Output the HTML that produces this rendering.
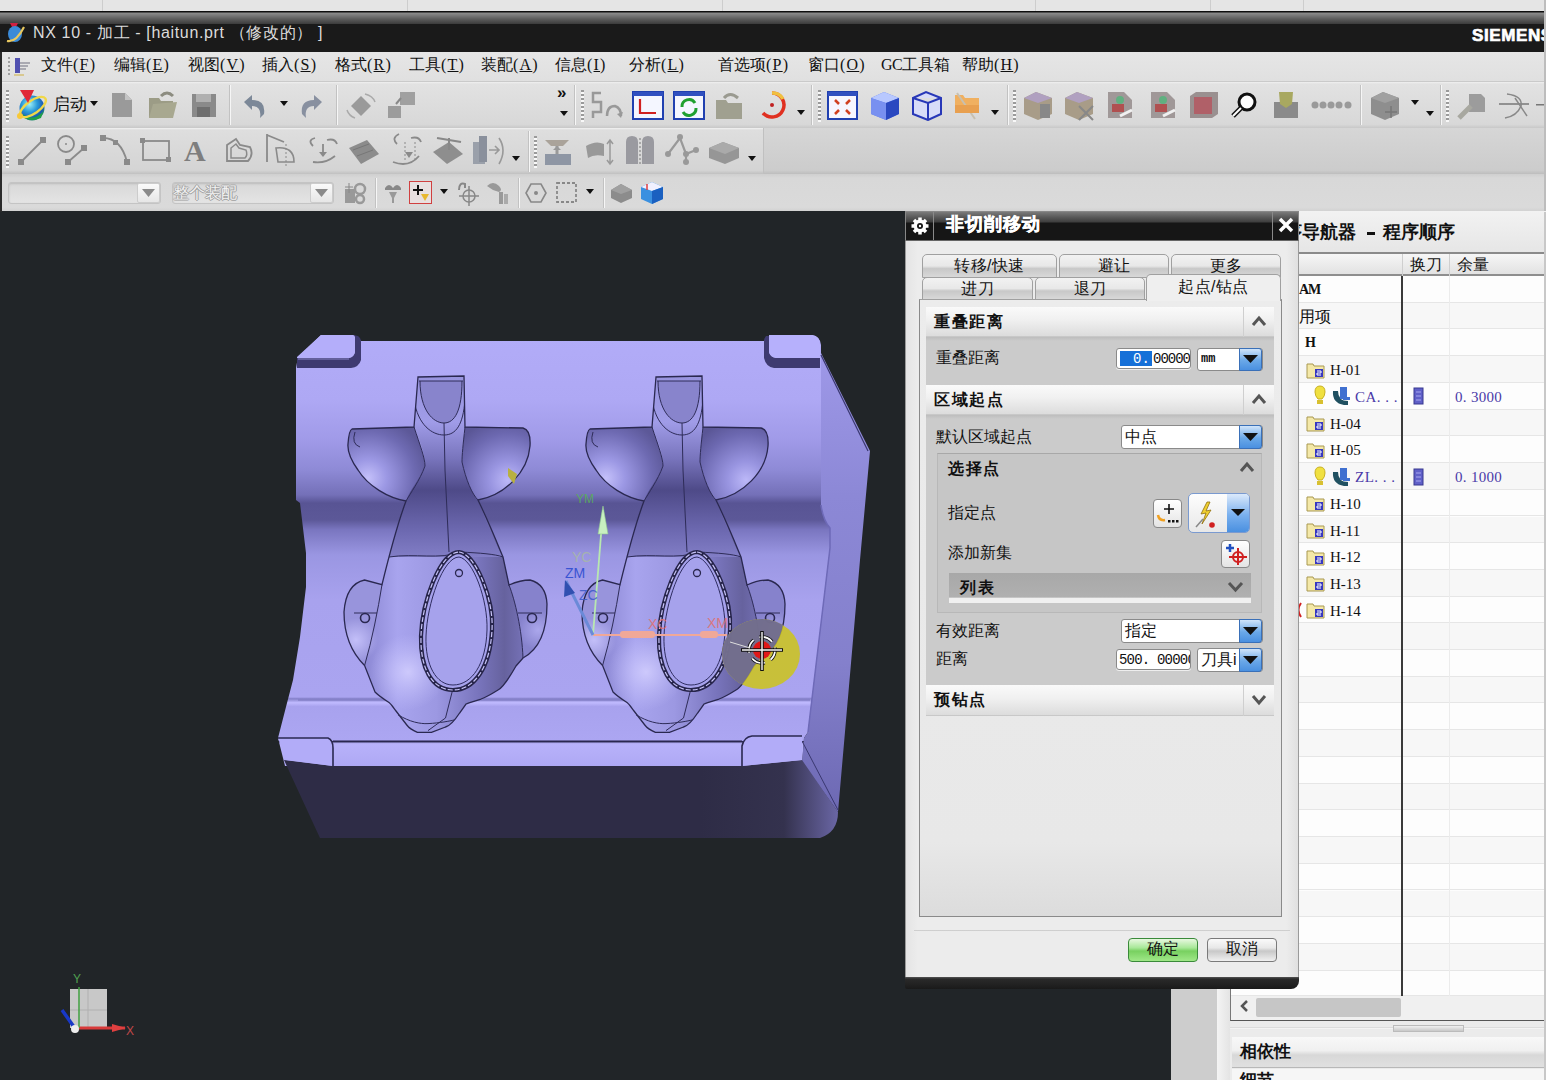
<!DOCTYPE html>
<html><head><meta charset="utf-8"><style>
*{box-sizing:border-box;margin:0;padding:0}
html,body{width:1546px;height:1080px;overflow:hidden;background:#212528;font-family:"Liberation Sans",sans-serif;position:relative}
.a{position:absolute}
.t{position:absolute;white-space:pre;line-height:1}
#topstrip{left:0;top:0;width:1546px;height:12px;background:#e5e5e5}
#topstrip i{position:absolute;top:0;width:1px;height:11px;background:#cdcdcd}
#titlegrad{left:0;top:11px;width:1544px;height:13px;background:linear-gradient(#0e0e0e 0,#0e0e0e 1px,#8c8c8c 2px,#5c5c5c 8px,#3c3c3c 13px)}
#title{left:0;top:24px;width:1544px;height:28px;background:#1a1a1a}
#menubar{left:0;top:52px;width:1544px;height:30px;background:linear-gradient(#e6e6e6,#e0e0e0);border-bottom:1px solid #cacaca}
.menu{top:57px;font-size:16px;color:#111;letter-spacing:0.5px}
#tb1{left:0;top:82px;width:1544px;height:46px;background:linear-gradient(#f0f0f0 0,#e2e2e2 2px,#d8d8d8 92%,#c8c8c8)}
#tb2{left:0;top:128px;width:1544px;height:46px;background:linear-gradient(#f2f2f2 0,#dedede 2px,#d4d4d4 92%,#c0c0c0)}
#tb3{left:0;top:174px;width:1544px;height:37px;background:linear-gradient(#cfcfcf 0,#d8d8d8 4px,#dadada 90%,#d2d2d2)}
#rightedge{left:1544px;top:0;width:2px;height:212px;background:#bdbdbd}
#leftedge{left:0;top:52px;width:2px;height:160px;background:#2a2a2a}
.sep{position:absolute;width:2px;background:linear-gradient(90deg,#c2c2c2 50%,#f6f6f6 50%)}
.grip{position:absolute;width:3px;background:repeating-linear-gradient(#9a9a9a 0 2px,#f8f8f8 2px 4px)}
</style></head><body><div id="wrap" style="position:absolute;left:0;top:0;width:1546px;height:1080px">
<div id="topstrip" class="a"><i style="left:102px"></i><i style="left:407px"></i><i style="left:722px"></i><i style="left:1035px"></i><i style="left:1210px"></i><i style="left:1303px"></i></div>
<div id="titlegrad" class="a"></div><div id="title" class="a"></div>
<svg class="a" style="left:4px;top:21px" width="24" height="24" viewBox="0 0 24 24">
<path d="M6 2 L14 2 L10 10 Z" fill="#d02040"/>
<ellipse cx="11" cy="13" rx="7" ry="8" fill="#3a8ad8"/>
<path d="M3 20 Q12 22 20 6" stroke="#e8c860" stroke-width="2.2" fill="none"/>
</svg>
<div class="t" style="left:33px;top:25px;font-size:16px;color:#dcdcdc;letter-spacing:0.65px">NX 10 - 加工 - [haitun.prt （修改的） ]</div>
<div class="a" style="left:1466px;top:24px;width:78px;height:28px;overflow:hidden"><div class="t" style="left:6px;top:3px;font-size:17px;font-weight:bold;color:#fff;letter-spacing:0.6px;-webkit-text-stroke:0.7px #fff">SIEMENS</div></div>
<div id="menubar" class="a"></div>
<svg class="a" style="left:6px;top:54px" width="26" height="26" viewBox="0 0 26 26">
<g fill="#a0a0a0"><rect x="2" y="3" width="2" height="2"/><rect x="2" y="7" width="2" height="2"/><rect x="2" y="11" width="2" height="2"/><rect x="2" y="15" width="2" height="2"/><rect x="2" y="19" width="2" height="2"/></g>
<rect x="9" y="4" width="5" height="15" fill="#5050b0"/><path d="M14 9 L24 9 M14 12 L22 12 M14 15 L20 15" stroke="#707080" stroke-width="1.2"/>
<path d="M8 21 L18 21" stroke="#d8c890" stroke-width="2"/></svg>
<div class="t menu" style="left:41px;letter-spacing:0">文件<span style="font-family:'Liberation Serif';letter-spacing:1.2px">(<u>F</u>)</span></div>
<div class="t menu" style="left:114px;letter-spacing:0">编辑<span style="font-family:'Liberation Serif';letter-spacing:1.2px">(<u>E</u>)</span></div>
<div class="t menu" style="left:188px;letter-spacing:0">视图<span style="font-family:'Liberation Serif';letter-spacing:1.2px">(<u>V</u>)</span></div>
<div class="t menu" style="left:262px;letter-spacing:0">插入<span style="font-family:'Liberation Serif';letter-spacing:1.2px">(<u>S</u>)</span></div>
<div class="t menu" style="left:335px;letter-spacing:0">格式<span style="font-family:'Liberation Serif';letter-spacing:1.2px">(<u>R</u>)</span></div>
<div class="t menu" style="left:409px;letter-spacing:0">工具<span style="font-family:'Liberation Serif';letter-spacing:1.2px">(<u>T</u>)</span></div>
<div class="t menu" style="left:481px;letter-spacing:0">装配<span style="font-family:'Liberation Serif';letter-spacing:1.2px">(<u>A</u>)</span></div>
<div class="t menu" style="left:555px;letter-spacing:0">信息<span style="font-family:'Liberation Serif';letter-spacing:1.2px">(<u>I</u>)</span></div>
<div class="t menu" style="left:629px;letter-spacing:0">分析<span style="font-family:'Liberation Serif';letter-spacing:1.2px">(<u>L</u>)</span></div>
<div class="t menu" style="left:718px;letter-spacing:0">首选项<span style="font-family:'Liberation Serif';letter-spacing:1.2px">(<u>P</u>)</span></div>
<div class="t menu" style="left:808px;letter-spacing:0">窗口<span style="font-family:'Liberation Serif';letter-spacing:1.2px">(<u>O</u>)</span></div>
<div class="t menu" style="left:881px;letter-spacing:0px"><span style="font-family:'Liberation Serif';letter-spacing:-0.5px">GC</span>工具箱</div>
<div class="t menu" style="left:962px;letter-spacing:0">帮助<span style="font-family:'Liberation Serif';letter-spacing:1.2px">(<u>H</u>)</span></div>
<div id="tb1" class="a"></div><div id="tb2" class="a"></div><div id="tb3" class="a"></div>
<div id="leftedge" class="a"></div><div id="rightedge" class="a"></div>
<div class="grip" style="left:6px;top:90px;height:32px"></div>
<svg class="a" style="left:15px;top:88px" width="34" height="34" viewBox="0 0 34 34"><defs><radialGradient id="globe" cx="0.4" cy="0.35" r="0.7"><stop offset="0" stop-color="#9ef0f8"/><stop offset="0.45" stop-color="#2a9ad8"/><stop offset="0.8" stop-color="#1a58b0"/><stop offset="1" stop-color="#20a050"/></radialGradient></defs>
<circle cx="17" cy="20" r="12.5" fill="url(#globe)"/><path d="M8 26 Q17 34 28 24 L26 30 Q17 34 9 30 Z" fill="#20a048"/>
<ellipse cx="18" cy="19" rx="15" ry="6.5" transform="rotate(-35 18 19)" fill="none" stroke="#f0d848" stroke-width="2.4"/>
<path d="M5 2 L19 2 L13 15 Z" fill="#e02838"/><circle cx="5" cy="28" r="3" fill="#f8c838"/></svg>
<div class="t" style="left:53px;top:96px;font-size:17px;color:#111">启动</div>
<svg class="a" style="left:90px;top:101px" width="9" height="6" viewBox="0 0 9 6"><path d="M0 0 L8 0 L4 5 Z" fill="#111"/></svg>
<svg class="a" style="left:111px;top:92px" width="22" height="26" viewBox="0 0 22 26"><path d="M1 1 L14 1 L21 8 L21 25 L1 25 Z" fill="#9a9a9a"/><path d="M14 1 L14 8 L21 8" fill="#c4c4c4"/></svg>
<svg class="a" style="left:147px;top:90px" width="32" height="30" viewBox="0 0 32 30"><path d="M2 8 L12 8 L14 11 L26 11 L26 28 L2 28 Z" fill="#9c9c86"/><path d="M6 14 L30 12 L26 28 L2 28 Z" fill="#a8a890"/><path d="M14 6 Q20 0 26 6" stroke="#8c8c80" stroke-width="3" fill="none"/></svg>
<svg class="a" style="left:191px;top:93px" width="26" height="25" viewBox="0 0 26 25"><rect x="1" y="1" width="24" height="23" fill="#8a8a8a"/><rect x="5" y="1" width="15" height="8" fill="#b0b0b0"/><rect x="6" y="14" width="13" height="10" fill="#6e6e6e"/></svg>
<div class="sep" style="left:229px;top:85px;height:40px"></div>
<svg class="a" style="left:240px;top:92px" width="28" height="26" viewBox="0 0 28 26"><path d="M4 10 L12 3 L12 8 Q26 8 24 22 L20 26 Q22 14 12 14 L12 18 Z" fill="#7c8898"/></svg>
<svg class="a" style="left:280px;top:101px" width="9" height="6" viewBox="0 0 9 6"><path d="M0 0 L8 0 L4 5 Z" fill="#111"/></svg>
<svg class="a" style="left:298px;top:92px" width="28" height="26" viewBox="0 0 28 26"><path d="M24 10 L16 3 L16 8 Q2 8 4 22 L8 26 Q6 14 16 14 L16 18 Z" fill="#8890a0"/></svg>
<div class="sep" style="left:336px;top:85px;height:40px"></div>
<svg class="a" style="left:345px;top:90px" width="32" height="30" viewBox="0 0 32 30"><path d="M16 6 L26 16 L16 26 L6 16 Z" fill="#9a9a9a"/><path d="M20 4 Q28 6 30 12 M2 20 Q4 26 10 28" stroke="#aaa" stroke-width="1.5" fill="none"/></svg>
<svg class="a" style="left:386px;top:90px" width="32" height="30" viewBox="0 0 32 30"><rect x="14" y="2" width="15" height="13" fill="#a0a0a0"/><rect x="2" y="16" width="13" height="12" fill="#9c9c9c"/><path d="M10 14 L15 8" stroke="#888" stroke-width="2"/></svg>
<div class="t" style="left:557px;top:84px;font-size:17px;font-weight:bold;color:#111">&raquo;</div>
<svg class="a" style="left:560px;top:111px" width="9" height="6" viewBox="0 0 9 6"><path d="M0 0 L8 0 L4 5 Z" fill="#111"/></svg>
<div class="sep" style="left:574px;top:85px;height:40px"></div>
<div class="grip" style="left:581px;top:90px;height:32px"></div>
<svg class="a" style="left:589px;top:90px" width="34" height="30" viewBox="0 0 34 30"><path d="M12 3 L4 3 L4 12 L12 12 L12 22 L4 22 L4 28" stroke="#999" stroke-width="2.5" fill="none"/><path d="M18 26 Q18 16 26 16 Q32 18 32 26" stroke="#999" stroke-width="2.5" fill="none"/><path d="M28 24 L32 28 L34 22" fill="#999"/></svg>
<svg class="a" style="left:632px;top:91px" width="32" height="29" viewBox="0 0 32 29"><rect x="1" y="1" width="30" height="27" fill="#f4f6ff" stroke="#2040b0" stroke-width="2"/><rect x="1" y="1" width="30" height="4" fill="#3050c0"/><path d="M8 8 L8 22 L24 22" stroke="#d02020" stroke-width="2.2" fill="none"/></svg>
<svg class="a" style="left:673px;top:91px" width="32" height="29" viewBox="0 0 32 29"><rect x="1" y="1" width="30" height="27" fill="#f4f6ff" stroke="#2040b0" stroke-width="2"/><rect x="1" y="1" width="30" height="4" fill="#3050c0"/><path d="M9 16 A7 7 0 0 1 22 12 M23 17 A7 7 0 0 1 10 21" stroke="#20a030" stroke-width="3" fill="none"/></svg>
<svg class="a" style="left:714px;top:90px" width="31" height="30" viewBox="0 0 31 30"><path d="M2 10 L12 10 L14 13 L28 13 L28 29 L2 29 Z" fill="#a0a090"/><path d="M10 8 Q16 1 24 8" stroke="#9a9a90" stroke-width="3" fill="none"/></svg>
<svg class="a" style="left:757px;top:89px" width="31" height="32" viewBox="0 0 31 32"><path d="M15 4 A12 12 0 1 1 6 24" stroke="#e03020" stroke-width="3.5" fill="none"/><path d="M15 4 A12 12 0 0 1 26 10" stroke="#f0c040" stroke-width="3.5" fill="none"/><circle cx="15" cy="16" r="2" fill="#c02020"/></svg>
<svg class="a" style="left:797px;top:110px" width="9" height="6" viewBox="0 0 9 6"><path d="M0 0 L8 0 L4 5 Z" fill="#111"/></svg>
<div class="sep" style="left:811px;top:85px;height:40px"></div>
<div class="grip" style="left:818px;top:90px;height:32px"></div>
<svg class="a" style="left:827px;top:91px" width="31" height="29" viewBox="0 0 31 29"><rect x="1" y="1" width="29" height="27" fill="#f6f6ff" stroke="#2040b0" stroke-width="2"/><rect x="1" y="1" width="29" height="4" fill="#3050c0"/><path d="M8 9 L12 13 M23 9 L19 13 M8 23 L12 19 M23 23 L19 19" stroke="#d04020" stroke-width="2.5"/></svg>
<svg class="a" style="left:868px;top:90px" width="33" height="31" viewBox="0 0 33 31"><path d="M3 8 L16 2 L31 8 L31 24 L18 30 L3 24 Z" fill="#5a7ae8"/><path d="M3 8 L16 2 L31 8 L18 13 Z" fill="#b8c8ff"/><path d="M18 13 L31 8 L31 24 L18 30 Z" fill="#2a48c0"/><path d="M3 8 L18 13 L18 30 L3 24 Z" fill="#7890f0"/></svg>
<svg class="a" style="left:910px;top:90px" width="33" height="31" viewBox="0 0 33 31"><path d="M3 8 L16 2 L31 8 L31 24 L18 30 L3 24 Z M3 8 L18 13 L31 8 M18 13 L18 30" fill="#d8dcf8" stroke="#2838b8" stroke-width="2"/></svg>
<svg class="a" style="left:951px;top:89px" width="33" height="32" viewBox="0 0 33 32"><path d="M4 6 L12 6 L14 9 L28 9 L28 24 L4 24 Z" fill="#f0b060"/><path d="M6 4 L24 30" stroke="#c8c0b0" stroke-width="2"/><rect x="4" y="16" width="24" height="8" fill="#e8a050"/></svg>
<svg class="a" style="left:991px;top:110px" width="9" height="6" viewBox="0 0 9 6"><path d="M0 0 L8 0 L4 5 Z" fill="#111"/></svg>
<div class="sep" style="left:1007px;top:85px;height:40px"></div>
<div class="grip" style="left:1013px;top:90px;height:32px"></div>
<svg class="a" style="left:1022px;top:90px" width="32" height="31" viewBox="0 0 32 31"><path d="M2 8 L14 2 L30 8 L30 24 L16 30 L2 24 Z" fill="#a89c88"/><path d="M2 8 L14 2 L30 8 L16 13 Z" fill="#b0a0c0"/><rect x="18" y="14" width="10" height="14" fill="#888"/></svg>
<svg class="a" style="left:1063px;top:90px" width="32" height="31" viewBox="0 0 32 31"><path d="M2 8 L14 2 L30 8 L30 24 L16 30 L2 24 Z" fill="#a89c88"/><path d="M2 8 L14 2 L30 8 L16 13 Z" fill="#b0a0c0"/><path d="M16 16 L30 30 M30 16 L16 30" stroke="#888" stroke-width="2"/></svg>
<svg class="a" style="left:1106px;top:90px" width="28" height="30" viewBox="0 0 28 30"><path d="M2 2 L18 2 L26 10 L26 28 L2 28 Z" fill="#a09898"/><circle cx="14" cy="10" r="4" fill="#60b080"/><rect x="6" y="14" width="12" height="8" fill="#b05050"/><path d="M14 26 L26 20" stroke="#f0f0f0" stroke-width="3"/></svg>
<svg class="a" style="left:1149px;top:90px" width="28" height="30" viewBox="0 0 28 30"><path d="M2 2 L18 2 L26 10 L26 28 L2 28 Z" fill="#a09898"/><circle cx="14" cy="10" r="4" fill="#60b080"/><rect x="6" y="14" width="12" height="8" fill="#b05050"/><path d="M14 26 L26 20" stroke="#f0f0f0" stroke-width="3"/></svg>
<svg class="a" style="left:1188px;top:90px" width="31" height="30" viewBox="0 0 31 30"><path d="M2 6 L8 2 L30 2 L30 24 L24 28 L2 28 Z" fill="#9a9090"/><rect x="6" y="7" width="18" height="17" fill="#b06068"/></svg>
<svg class="a" style="left:1230px;top:90px" width="30" height="30" viewBox="0 0 30 30"><circle cx="17" cy="12" r="8" fill="#fff" stroke="#111" stroke-width="3"/><path d="M11 18 L3 26" stroke="#111" stroke-width="5"/><path d="M11 18 L3 26" stroke="#fff" stroke-width="2"/></svg>
<svg class="a" style="left:1272px;top:90px" width="28" height="30" viewBox="0 0 28 30"><rect x="2" y="12" width="24" height="16" fill="#8a8a8a"/><path d="M7 2 L21 2 L20 14 L14 18 L8 14 Z" fill="#a8a860"/></svg>
<svg class="a" style="left:1311px;top:98px" width="42" height="14" viewBox="0 0 42 14"><circle cx="4" cy="7" r="3.5" fill="#9a9a9a"/><circle cx="12" cy="7" r="3.5" fill="#9a9a9a"/><circle cx="20" cy="7" r="3.5" fill="#9a9a9a"/><circle cx="28" cy="7" r="3.5" fill="#9a9a9a"/><circle cx="37" cy="7" r="3.5" fill="#9a9a9a"/></svg>
<div class="sep" style="left:1360px;top:85px;height:40px"></div>
<svg class="a" style="left:1369px;top:90px" width="32" height="31" viewBox="0 0 32 31"><path d="M2 8 L14 2 L30 8 L30 24 L16 30 L2 24 Z" fill="#8e8e8e"/><path d="M2 8 L14 2 L30 8 L16 13 Z" fill="#a0a0a0"/><path d="M16 22 L28 22 M22 16 L22 28" stroke="#777" stroke-width="1.5"/></svg>
<svg class="a" style="left:1411px;top:100px" width="9" height="6" viewBox="0 0 9 6"><path d="M0 0 L8 0 L4 5 Z" fill="#111"/></svg>
<svg class="a" style="left:1426px;top:111px" width="9" height="6" viewBox="0 0 9 6"><path d="M0 0 L8 0 L4 5 Z" fill="#111"/></svg>
<div class="sep" style="left:1440px;top:85px;height:40px"></div>
<div class="grip" style="left:1446px;top:90px;height:32px"></div>
<svg class="a" style="left:1455px;top:90px" width="34" height="32" viewBox="0 0 34 32"><path d="M14 4 L26 4 L30 8 L30 22 L14 22 Z" fill="#9c9c9c"/><path d="M4 28 L16 16" stroke="#a8a8a0" stroke-width="5"/></svg>
<svg class="a" style="left:1497px;top:90px" width="34" height="30" viewBox="0 0 34 30"><path d="M2 14 L32 14" stroke="#777" stroke-width="1.5"/><path d="M10 4 Q26 6 24 16 Q20 26 8 28" stroke="#888" stroke-width="1.5" fill="none"/><path d="M18 8 L30 26" stroke="#888" stroke-width="1.5"/></svg>
<svg class="a" style="left:1536px;top:104px" width="8" height="3" viewBox="0 0 8 3"><rect width="8" height="1.5" fill="#777"/></svg>
<div class="grip" style="left:6px;top:136px;height:32px"></div>
<svg class="a" style="left:17px;top:136px" width="30" height="30" viewBox="0 0 30 30"><path d="M4 26 L26 4" stroke="#8a8a8a" stroke-width="1.8"/><rect x="1" y="23" width="6" height="6" fill="#8a8a8a"/><rect x="23" y="1" width="6" height="6" fill="#8a8a8a"/></svg>
<svg class="a" style="left:56px;top:134px" width="34" height="34" viewBox="0 0 34 34"><circle cx="10" cy="10" r="8" fill="none" stroke="#8a8a8a" stroke-width="1.8"/><circle cx="10" cy="10" r="1" fill="#8a8a8a"/><path d="M12 28 L28 14" stroke="#8a8a8a" stroke-width="1.8"/><rect x="9" y="25" width="6" height="6" fill="#8a8a8a"/><rect x="25" y="11" width="6" height="6" fill="#8a8a8a"/></svg>
<svg class="a" style="left:99px;top:134px" width="34" height="34" viewBox="0 0 34 34"><path d="M4 4 Q22 4 28 28" stroke="#8a8a8a" stroke-width="1.8" fill="none"/><rect x="1" y="1" width="6" height="6" fill="#8a8a8a"/><rect x="14" y="6" width="5" height="5" fill="#8a8a8a"/><rect x="25" y="25" width="6" height="6" fill="#8a8a8a"/></svg>
<svg class="a" style="left:140px;top:138px" width="32" height="26" viewBox="0 0 32 26"><rect x="3" y="3" width="26" height="19" fill="none" stroke="#8a8a8a" stroke-width="1.8"/><rect x="0" y="0" width="5" height="5" fill="#8a8a8a"/><rect x="26" y="19" width="5" height="5" fill="#8a8a8a"/></svg>
<div class="t" style="left:184px;top:136px;font-size:30px;font-family:'Liberation Serif';font-weight:bold;color:#7e7e7e">A</div>
<svg class="a" style="left:224px;top:137px" width="30" height="28" viewBox="0 0 30 28"><path d="M3 8 L12 2 L16 8 L26 10 Q30 18 24 24 L3 24 Z" fill="none" stroke="#8a8a8a" stroke-width="1.8"/><path d="M7 11 L12 7 L15 11 L22 13 Q24 18 21 21 L7 21 Z" fill="none" stroke="#8a8a8a" stroke-width="1.5"/></svg>
<svg class="a" style="left:264px;top:132px" width="34" height="36" viewBox="0 0 34 36"><path d="M3 2 L3 30 M3 3 L20 10" stroke="#8a8a8a" stroke-width="1.8"/><path d="M12 16 Q30 14 30 30 L14 30 Z" stroke="#8a8a8a" stroke-width="1.6" fill="none"/><path d="M22 12 L22 34" stroke="#8a8a8a" stroke-dasharray="2 2"/></svg>
<svg class="a" style="left:305px;top:134px" width="34" height="34" viewBox="0 0 34 34"><path d="M10 4 Q2 6 8 12 M22 6 Q30 4 32 10 M8 28 Q20 30 30 22 M18 10 L18 22" stroke="#8a8a8a" stroke-width="1.8" fill="none"/><path d="M14 18 L22 18 L18 23 Z" fill="#8a8a8a"/></svg>
<svg class="a" style="left:347px;top:136px" width="34" height="30" viewBox="0 0 34 30"><path d="M2 12 L20 4 L32 18 L14 28 Z" fill="#8c8c8c"/><path d="M6 14 L22 8 M10 20 L26 14" stroke="#777" stroke-width="1"/></svg>
<svg class="a" style="left:389px;top:132px" width="34" height="36" viewBox="0 0 34 36"><path d="M10 2 Q2 6 8 12 M22 6 Q30 4 32 10 M4 30 Q20 36 30 24" stroke="#8a8a8a" stroke-width="1.8" fill="none"/><path d="M16 10 L16 28 M26 10 L26 28" stroke="#8a8a8a" stroke-dasharray="2 2"/><path d="M16 20 L24 20 L20 26 Z" fill="#8a8a8a"/></svg>
<svg class="a" style="left:431px;top:132px" width="34" height="36" viewBox="0 0 34 36"><path d="M2 20 L18 10 L32 22 L16 32 Z" fill="#8e8e8e"/><path d="M6 6 L30 10" stroke="#888" stroke-width="2"/><path d="M18 6 L18 18" stroke="#888" stroke-width="2"/></svg>
<svg class="a" style="left:471px;top:134px" width="36" height="32" viewBox="0 0 36 32"><rect x="2" y="8" width="12" height="22" fill="#9aa0aa"/><rect x="8" y="2" width="8" height="26" fill="#8a909c"/><path d="M18 16 L28 16 M24 12 L28 16 L24 20" stroke="#999" stroke-width="1.6" fill="none"/><path d="M28 4 Q36 16 28 30" stroke="#999" stroke-width="1.6" fill="none"/></svg>
<svg class="a" style="left:512px;top:156px" width="9" height="6" viewBox="0 0 9 6"><path d="M0 0 L8 0 L4 5 Z" fill="#111"/></svg>
<div class="sep" style="left:528px;top:131px;height:41px"></div>
<div class="grip" style="left:534px;top:136px;height:32px"></div>
<svg class="a" style="left:543px;top:134px" width="30" height="32" viewBox="0 0 30 32"><path d="M2 6 L26 6 L20 12 L8 12 Z" fill="#aaa39a"/><path d="M14 12 L14 20" stroke="#999" stroke-width="3"/><path d="M10 16 L14 12 L18 16" fill="#999"/><rect x="2" y="20" width="26" height="11" fill="#8e96a4"/></svg>
<svg class="a" style="left:584px;top:136px" width="30" height="30" viewBox="0 0 30 30"><path d="M2 10 Q12 4 20 8 L20 20 Q10 18 4 22 Z" fill="#999"/><path d="M26 4 L26 28 M23 8 L26 4 L29 8 M23 24 L26 28 L29 24" stroke="#999" stroke-width="1.5" fill="none"/></svg>
<svg class="a" style="left:624px;top:134px" width="34" height="32" viewBox="0 0 34 32"><path d="M2 30 L2 8 Q2 2 8 2 Q14 2 14 8 L14 30 Z M18 30 L18 8 Q18 2 24 2 Q30 2 30 8 L30 30 Z" fill="#9a9aa0"/><path d="M16 4 L16 30" stroke="#777" stroke-dasharray="2 2"/></svg>
<svg class="a" style="left:664px;top:132px" width="36" height="36" viewBox="0 0 36 36"><path d="M4 22 L16 6 L22 22 L32 18 M16 6 L16 4 M22 22 L22 32" stroke="#999" stroke-width="2.2" fill="none"/><circle cx="16" cy="5" r="3" fill="#999"/><circle cx="4" cy="22" r="3" fill="#999"/><circle cx="22" cy="22" r="3" fill="#999"/><circle cx="32" cy="18" r="3" fill="#999"/><circle cx="22" cy="30" r="3" fill="#999"/></svg>
<svg class="a" style="left:707px;top:138px" width="34" height="26" viewBox="0 0 34 26"><path d="M2 10 L16 4 L32 10 L32 20 L18 26 L2 20 Z" fill="#969696"/><path d="M2 10 L16 4 L32 10 L18 16 Z" fill="#aaa"/></svg>
<svg class="a" style="left:748px;top:156px" width="9" height="6" viewBox="0 0 9 6"><path d="M0 0 L8 0 L4 5 Z" fill="#111"/></svg>
<div class="a" style="left:763px;top:128px;width:781px;height:46px;background:linear-gradient(#d6d6d6,#cccccc 92%,#bdbdbd);border-left:1px solid #c0c0c0"></div>
<div class="a" style="left:8px;top:182px;width:153px;height:22px;border:1px solid #c4c4c4;border-radius:3px;background:linear-gradient(#d8d8d8,#e4e4e4);box-shadow:inset 0 1px 2px #bbb"></div>
<div class="a" style="left:137px;top:183px;width:23px;height:20px;border:1px solid #ccc;border-radius:2px;background:linear-gradient(#fafafa,#e6e6e6)"></div>
<svg class="a" style="left:142px;top:189px" width="13" height="9" viewBox="0 0 13 9"><path d="M0 0 L13 0 L6.5 8 Z" fill="#8a8a8a"/></svg>
<div class="a" style="left:172px;top:182px;width:162px;height:22px;border:1px solid #c4c4c4;border-radius:3px;background:linear-gradient(#d8d8d8,#e4e4e4);box-shadow:inset 0 1px 2px #bbb"></div>
<div class="a" style="left:310px;top:183px;width:23px;height:20px;border:1px solid #ccc;border-radius:2px;background:linear-gradient(#fafafa,#e6e6e6)"></div>
<svg class="a" style="left:315px;top:189px" width="13" height="9" viewBox="0 0 13 9"><path d="M0 0 L13 0 L6.5 8 Z" fill="#8a8a8a"/></svg>
<div class="t" style="left:173px;top:185px;font-size:16px;color:#f2f2f2;text-shadow:1px 0 0 #a0a0a0,-1px 0 0 #a0a0a0,0 1px 0 #a0a0a0,0 -1px 0 #a8a8a8">整个装配</div>
<svg class="a" style="left:343px;top:181px" width="26" height="24" viewBox="0 0 26 24"><rect x="2" y="8" width="10" height="14" fill="#999"/><circle cx="17" cy="8" r="5" fill="none" stroke="#999" stroke-width="2.5"/><circle cx="17" cy="18" r="4" fill="none" stroke="#999" stroke-width="2.5"/><path d="M6 2 L6 12 M2 6 L10 6" stroke="#888"/></svg>
<div class="sep" style="left:375px;top:178px;height:30px"></div>
<svg class="a" style="left:383px;top:182px" width="20" height="22" viewBox="0 0 20 22"><path d="M2 6 Q6 0 10 6 Q14 0 18 6 L18 8 L2 8 Z" fill="#888"/><path d="M6 10 L14 10 L11 16 L11 21 L9 21 L9 16 Z" fill="#999"/></svg>
<div class="a" style="left:409px;top:181px;width:23px;height:23px;border:1.5px solid #d04040;background:#e8e0e0"></div>
<svg class="a" style="left:411px;top:183px" width="20" height="20" viewBox="0 0 20 20"><path d="M7 2 L7 12 M2 7 L12 7" stroke="#111" stroke-width="2"/><path d="M10 11 L18 11 L14 18 Z" fill="#e8b830"/></svg>
<svg class="a" style="left:440px;top:189px" width="9" height="6" viewBox="0 0 9 6"><path d="M0 0 L8 0 L4 5 Z" fill="#111"/></svg>
<svg class="a" style="left:455px;top:180px" width="24" height="26" viewBox="0 0 24 26"><path d="M4 10 Q4 2 10 4 L10 8" stroke="#888" stroke-width="2" fill="none"/><circle cx="14" cy="16" r="6" fill="none" stroke="#888" stroke-width="1.5"/><path d="M14 6 L14 26 M4 16 L24 16" stroke="#888" stroke-width="1.5"/></svg>
<svg class="a" style="left:485px;top:180px" width="24" height="26" viewBox="0 0 24 26"><path d="M2 6 Q8 0 14 6 Q18 10 14 12 L8 10 Z" fill="#999"/><rect x="14" y="12" width="4" height="12" fill="#999"/><rect x="19" y="14" width="4" height="10" fill="#aaa"/></svg>
<div class="sep" style="left:518px;top:178px;height:30px"></div>
<svg class="a" style="left:525px;top:182px" width="22" height="22" viewBox="0 0 22 22"><path d="M6 2 L16 2 L21 11 L16 20 L6 20 L1 11 Z" fill="none" stroke="#888" stroke-width="1.6"/><circle cx="11" cy="11" r="2" fill="#888"/></svg>
<svg class="a" style="left:555px;top:181px" width="24" height="24" viewBox="0 0 24 24"><rect x="2" y="2" width="19" height="19" fill="none" stroke="#888" stroke-width="1.8" stroke-dasharray="3 2"/></svg>
<svg class="a" style="left:586px;top:189px" width="9" height="6" viewBox="0 0 9 6"><path d="M0 0 L8 0 L4 5 Z" fill="#111"/></svg>
<div class="sep" style="left:603px;top:178px;height:30px"></div>
<svg class="a" style="left:609px;top:182px" width="25" height="22" viewBox="0 0 25 22"><path d="M2 8 L12 2 L23 8 L23 16 L12 21 L2 16 Z" fill="#8c8c8c"/><path d="M2 8 L12 2 L23 8 L12 12 Z" fill="#a0a0a0"/></svg>
<svg class="a" style="left:639px;top:180px" width="26" height="26" viewBox="0 0 26 26"><path d="M2 7 L13 2 L24 7 L24 19 L13 24 L2 19 Z" fill="#3a90e0"/><path d="M2 7 L13 2 L24 7 L13 11 Z" fill="#f0f0ff"/><path d="M13 11 L24 7 L24 19 L13 24 Z" fill="#1a60c0"/><path d="M8 4 L8 10" stroke="#e04040" stroke-width="1.5"/></svg>

<svg class="a" style="left:0;top:0" width="1546" height="1080" viewBox="0 0 1546 1080">
<defs>
<linearGradient id="gSurf" gradientUnits="userSpaceOnUse" x1="0" y1="335" x2="0" y2="766">
<stop offset="0" stop-color="#b2acf8"/>
<stop offset="0.151" stop-color="#aea8f4"/>
<stop offset="0.244" stop-color="#a09ae8"/>
<stop offset="0.313" stop-color="#8e8ad6"/>
<stop offset="0.371" stop-color="#7470b8"/>
<stop offset="0.39" stop-color="#585494"/>
<stop offset="0.429" stop-color="#5c5898"/>
<stop offset="0.452" stop-color="#7a76c0"/>
<stop offset="0.51" stop-color="#9a96e2"/>
<stop offset="0.615" stop-color="#a8a2ee"/>
<stop offset="0.84" stop-color="#aaa4f0"/>
<stop offset="0.844" stop-color="#8480c8"/>
<stop offset="0.853" stop-color="#c0baff"/>
<stop offset="0.862" stop-color="#a8a2ee"/>
<stop offset="0.941" stop-color="#aca6f2"/>
<stop offset="0.943" stop-color="#2a2850"/>
<stop offset="0.948" stop-color="#b8b2fa"/>
<stop offset="1" stop-color="#aea8f4"/>
</linearGradient>
<linearGradient id="gSide" gradientUnits="userSpaceOnUse" x1="0" y1="353" x2="0" y2="830">
<stop offset="0" stop-color="#9e98e8"/>
<stop offset="0.3" stop-color="#8c88d6"/>
<stop offset="0.65" stop-color="#8480cc"/>
<stop offset="1" stop-color="#6a66b0"/>
</linearGradient>
<linearGradient id="gBot" gradientUnits="userSpaceOnUse" x1="700" y1="0" x2="840" y2="0">
<stop offset="0" stop-color="#2e2c46"/>
<stop offset="0.6" stop-color="#34324e"/>
<stop offset="1" stop-color="#6c68a8"/>
</linearGradient>
<linearGradient id="gBody" gradientUnits="userSpaceOnUse" x1="360" y1="0" x2="530" y2="0">
<stop offset="0" stop-color="#9a96de"/>
<stop offset="0.2" stop-color="#b4b0f4"/>
<stop offset="0.45" stop-color="#a8a4ee"/>
<stop offset="0.75" stop-color="#8c88d2"/>
<stop offset="1" stop-color="#7e7ac4"/>
</linearGradient>
<radialGradient id="gFinL" gradientUnits="userSpaceOnUse" cx="375" cy="485" r="60">
<stop offset="0" stop-color="#c8c4fc"/>
<stop offset="0.35" stop-color="#a4a0ea"/>
<stop offset="1" stop-color="#6a66ae"/>
</radialGradient>
<radialGradient id="gFinR" gradientUnits="userSpaceOnUse" cx="500" cy="490" r="60">
<stop offset="0" stop-color="#c0bcfa"/>
<stop offset="0.35" stop-color="#a09ce6"/>
<stop offset="1" stop-color="#6a66ae"/>
</radialGradient>
<linearGradient id="gNeck" gradientUnits="userSpaceOnUse" x1="0" y1="380" x2="0" y2="560">
<stop offset="0" stop-color="#9c98e2"/>
<stop offset="0.25" stop-color="#a8a4ec"/>
<stop offset="0.55" stop-color="#5e5aa0"/>
<stop offset="0.8" stop-color="#7a76c0"/>
<stop offset="1" stop-color="#9894dc"/>
</linearGradient>
<linearGradient id="gNoz" gradientUnits="userSpaceOnUse" x1="0" y1="381" x2="0" y2="425">
<stop offset="0" stop-color="#8a86d0"/>
<stop offset="1" stop-color="#a29eea"/>
</linearGradient>
<radialGradient id="gLow" gradientUnits="userSpaceOnUse" cx="355" cy="630" r="30">
<stop offset="0" stop-color="#b8b4f6"/>
<stop offset="1" stop-color="#7a76c0"/>
</radialGradient>
<radialGradient id="gLowR" gradientUnits="userSpaceOnUse" cx="536" cy="610" r="30">
<stop offset="0" stop-color="#a8a4ee"/>
<stop offset="1" stop-color="#6e6ab4"/>
</radialGradient>
<radialGradient id="gHi" gradientUnits="userSpaceOnUse" cx="400" cy="650" r="55">
<stop offset="0" stop-color="#d0ccff" stop-opacity="0.8"/>
<stop offset="1" stop-color="#d0ccff" stop-opacity="0"/>
</radialGradient>
<clipPath id="cFish"><path d="M418,377 L464,376 L465,427 L523,428 Q531,430 530,446 C528,472 505,495 478,500 C490,525 498,545 503,557 L509,585 C516,582 524,580 530,580 Q546,584 547,604 Q547,645 523,658 L516,666 C508,680 502,688 498,690 C490,695 484,698 481,699 C474,701 469,703 466,704 L459.6,713 C455,720 450,726 445.5,727 L431.5,732.4 L417.4,732.4 C412,730 409,728 406.8,725 L396,711 C393,707 391,704 389,702.5 C382,698 378,695 375,692 L364.6,665.5 Q344,645 344,612 Q346,584 364.6,580 L382,584.6 C388,560 396,528 406,501 C388,498 368,486 358,470 Q347,455 348,444 Q349,430 352,429 L414,427 Z"/></clipPath>
<linearGradient id="gBody2" gradientUnits="userSpaceOnUse" x1="360" y1="0" x2="530" y2="0">
<stop offset="0" stop-color="#8884d0"/>
<stop offset="0.22" stop-color="#a8a4ee"/>
<stop offset="0.45" stop-color="#9c98e2"/>
<stop offset="0.7" stop-color="#7874bc"/>
<stop offset="0.85" stop-color="#66629e"/>
<stop offset="1" stop-color="#7a76be"/>
</linearGradient>
<radialGradient id="gFinL2" gradientUnits="userSpaceOnUse" cx="368" cy="478" r="62">
<stop offset="0" stop-color="#c4c0fa"/>
<stop offset="0.3" stop-color="#9c98e4"/>
<stop offset="0.75" stop-color="#6e6ab2"/>
<stop offset="1" stop-color="#5c5898"/>
</radialGradient>
<radialGradient id="gFinR2" gradientUnits="userSpaceOnUse" cx="508" cy="480" r="62">
<stop offset="0" stop-color="#bcb8f8"/>
<stop offset="0.3" stop-color="#9894e0"/>
<stop offset="0.75" stop-color="#6c68b0"/>
<stop offset="1" stop-color="#5a5696"/>
</radialGradient>
<linearGradient id="gNeck2" gradientUnits="userSpaceOnUse" x1="0" y1="376" x2="0" y2="560">
<stop offset="0" stop-color="#9894de"/>
<stop offset="0.25" stop-color="#a09ce8"/>
<stop offset="0.45" stop-color="#7874bc"/>
<stop offset="0.62" stop-color="#4e4a88"/>
<stop offset="0.85" stop-color="#6e6ab2"/>
<stop offset="1" stop-color="#8480c8"/>
</linearGradient>
<radialGradient id="gHL" gradientUnits="userSpaceOnUse" cx="408" cy="672" r="38">
<stop offset="0" stop-color="#d4d0ff" stop-opacity="0.85"/>
<stop offset="1" stop-color="#c8c4ff" stop-opacity="0"/>
</radialGradient>
<radialGradient id="gLF" gradientUnits="userSpaceOnUse" cx="356" cy="640" r="22">
<stop offset="0" stop-color="#c8c4fc" stop-opacity="0.9"/>
<stop offset="1" stop-color="#c8c4fc" stop-opacity="0"/>
</radialGradient>
<radialGradient id="gRF" gradientUnits="userSpaceOnUse" cx="538" cy="630" r="20">
<stop offset="0" stop-color="#b4b0f4" stop-opacity="0.8"/>
<stop offset="1" stop-color="#b4b0f4" stop-opacity="0"/>
</radialGradient>
<g id="fish">
<path d="M418,377 L464,376 L465,427 L523,428 Q531,430 530,446 C528,472 505,495 478,500 C490,525 498,545 503,557 L509,585 C516,582 524,580 530,580 Q546,584 547,604 Q547,645 523,658 L516,666 C508,680 502,688 498,690 C490,695 484,698 481,699 C474,701 469,703 466,704 L459.6,713 C455,720 450,726 445.5,727 L431.5,732.4 L417.4,732.4 C412,730 409,728 406.8,725 L396,711 C393,707 391,704 389,702.5 C382,698 378,695 375,692 L364.6,665.5 Q344,645 344,612 Q346,584 364.6,580 L382,584.6 C388,560 396,528 406,501 C388,498 368,486 358,470 Q347,455 348,444 Q349,430 352,429 L414,427 Z" fill="url(#gBody2)"/>
<g clip-path="url(#cFish)">
<path d="M344,420 L414,427 C420,445 425,458 425,466 C420,480 410,494 406,501 L340,510 Z" fill="url(#gFinL2)"/>
<path d="M465,427 L550,420 L550,510 L478,500 C472,494 466,480 462,462 C462,455 463,445 465,427 Z" fill="url(#gFinR2)"/>
<path d="M414,370 L470,370 L465,427 C463,445 462,455 462,462 C466,480 472,494 478,500 C488,525 496,545 503,557 L389,557 C392,540 398,520 406,501 C410,490 420,478 425,466 C425,455 420,440 414,427 Z" fill="url(#gNeck2)"/>
<path d="M420,381 C420,410 433,423 444,423 C455,423 462,410 462,381 Z" fill="#8884cc"/>
<path d="M414,400 C418,425 432,435 444,435 C456,435 463,425 465,400" fill="none" stroke="#2e2c58" stroke-width="1"/>
<path d="M364.6,580 L382,584.6 C378,610 372,640 364.6,665.5 Q344,645 344,612 Q346,584 364.6,580 Z" fill="#9894dc"/>
<circle cx="356" cy="640" r="22" fill="url(#gLF)"/>
<path d="M509,585 C516,582 524,580 530,580 Q546,584 547,604 Q547,645 523,658 C522,630 515,600 509,585 Z" fill="#8682cc"/>
<circle cx="538" cy="630" r="20" fill="url(#gRF)"/>
<circle cx="408" cy="672" r="38" fill="url(#gHL)"/>
</g>
<path d="M418,377 L464,376 L465,427 L523,428 Q531,430 530,446 C528,472 505,495 478,500 C490,525 498,545 503,557 L509,585 C516,582 524,580 530,580 Q546,584 547,604 Q547,645 523,658 L516,666 C508,680 502,688 498,690 C490,695 484,698 481,699 C474,701 469,703 466,704 L459.6,713 C455,720 450,726 445.5,727 L431.5,732.4 L417.4,732.4 C412,730 409,728 406.8,725 L396,711 C393,707 391,704 389,702.5 C382,698 378,695 375,692 L364.6,665.5 Q344,645 344,612 Q346,584 364.6,580 L382,584.6 C388,560 396,528 406,501 C388,498 368,486 358,470 Q347,455 348,444 Q349,430 352,429 L414,427 Z" fill="none" stroke="#2a2850" stroke-width="1.3"/>
<g fill="none" stroke="#2e2c58" stroke-width="1">
<path d="M420,381 C420,410 433,423 444,423 C455,423 462,410 462,381"/>
<path d="M419,381 L463,381"/>
<path d="M414,427 C420,445 425,458 425,466 C420,480 410,494 406,501"/>
<path d="M465,427 C463,445 462,455 462,462 C466,480 472,494 478,500"/>
<path d="M444,423 L445,470 L449,552"/>
<path d="M389,557 C415,553 440,560 460,552 C480,553 495,554 503,557"/>
<path d="M382,584.6 C378,610 372,640 364.6,665.5"/>
<path d="M509,585 C515,600 522,630 523,658"/>
<path d="M354,613 L377,613 M518,613 L542,613"/>
<path d="M452.6,690 L445.5,718 L428,730.6"/>
<path d="M398,714.8 C410,722 420,724 428,723.6 C440,723 450,721 454,720"/>
<path d="M355,432 Q351,444 360,447"/>
</g>
<path d="M459,552 C476,554 494,600 492,630 C490,668 474,690 453,690 C432,690 420,668 421,636 C422,602 440,552 459,552 Z" fill="#a6a2ec" stroke="#26244a" stroke-width="4.2"/>
<path d="M459,552 C476,554 494,600 492,630 C490,668 474,690 453,690 C432,690 420,668 421,636 C422,602 440,552 459,552 Z" fill="none" stroke="#c8c4f8" stroke-width="1.2" stroke-dasharray="5 2"/>
<path d="M459,557 C473,559 488,600 487,630 C486,664 472,685 453,685 C436,685 425,665 426,636 C427,604 443,557 459,557 Z" fill="none" stroke="#2e2c60" stroke-width="1"/>
<circle cx="459" cy="573" r="3.5" fill="none" stroke="#2a2850" stroke-width="1.3"/>
<circle cx="365" cy="618" r="4.5" fill="none" stroke="#2a2850" stroke-width="1.6"/>
<circle cx="532" cy="618" r="4.5" fill="none" stroke="#2a2850" stroke-width="1.6"/>
</g>
</defs>
<!-- main top surface -->
<path d="M296,368 L298,357 L321,335 L354,335 L361,341 L764,341 L770,335 L812,335 Q820,336 821,345 L821,505 Q823,520 830,528 L830,548 L808,732 L804,738 L802,766 L285,766 L278,738 L287,703 L293,680 L300,637 L306,587 L306,553 L300,503 L296,500 Z" fill="url(#gSurf)"/>
<!-- right side face -->
<path d="M821,353 L870,451 L860,560 L838,812 L802,762 L804,738 L808,732 L830,548 L830,528 Q823,520 821,505 Z" fill="url(#gSide)"/>
<path d="M821,505 Q823,520 830,528 L830,548 L808,732" fill="none" stroke="#6e6ab8" stroke-width="1.5"/>
<path d="M821,355 L868,451" stroke="#3a3870" stroke-width="1.2" fill="none"/>
<!-- bottom face -->
<path d="M284,760 L333,766 L742,766 L802,760 L838,812 Q838,832 820,838 L320,838 Z" fill="url(#gBot)"/>
<path d="M802,741 L838,810" stroke="#3a3870" stroke-width="1"/>
<!-- pads -->
<path d="M353,335 L358,336 Q361,338 361,342 L361,360 Q359,367 351,368 L297,368 L297,358 L349,358 Q354,357 355,352 L355,337 Z" fill="#3e3a70"/>
<path d="M297,357 L321,335 L353,335 L355,337 L355,352 Q354,357 349,358 L297,358 Z" fill="#b4aefa"/>
<path d="M298,359 L349,359" stroke="#8a86c8" stroke-width="1"/>
<path d="M766,336 Q764,338 764,342 L764,358 Q766,367 774,368 L820,368 L820,358 L776,358 Q770,357 769,352 L769,336 Z" fill="#3e3a70"/>
<path d="M769,335 L812,335 Q820,336 820,345 L820,358 L776,358 Q770,357 769,352 Z" fill="#b6b0fc"/>
<path d="M278,738 L328,738 Q333,740 333,748 L333,766 L286,760 Z" fill="#b2acf8"/>
<path d="M278,738 L328,738 Q333,740 333,748 L333,766" fill="none" stroke="#2a2850" stroke-width="1.6"/>
<path d="M752,736 L802,736 L802,760 L742,766 L742,746 Q744,737 752,736 Z" fill="#b2acf8"/>
<path d="M802,736 L752,736 Q744,737 742,746 L742,766" fill="none" stroke="#2a2850" stroke-width="1.6"/>
<path d="M333,741 L742,741" stroke="#26244a" stroke-width="1.2"/>
<path d="M298,700 L810,700" stroke="#7c78c0" stroke-width="1.5" opacity="0.7"/>
<!-- fish -->
<use href="#fish"/>
<use href="#fish" transform="translate(238,0)"/>
<!-- small yellow marker -->
<path d="M508,468 L517,474 L514,484 L508,476 Z" fill="#b8b040"/>
<!-- yellow circle -->
<ellipse cx="761" cy="654" rx="39" ry="35" fill="#ccc420" opacity="0.88"/>
<g transform="translate(238,0)" clip-path="url(#cFish)"><ellipse cx="523" cy="654" rx="39" ry="35" fill="#64609e" opacity="0.85"/></g>
<!-- axes -->
<path d="M593,635 L727,635" stroke="#f0a898" stroke-width="2"/>
<rect x="620" y="631" width="35" height="7" rx="3" fill="#f0a898"/>
<rect x="700" y="631" width="18" height="7" rx="3" fill="#f0a898"/>
<path d="M593,635 L603,510" stroke="#b8e8b0" stroke-width="1.8"/>
<path d="M603,506 L598,534 L608,534 Z" fill="#c8f0c0" stroke="#90c890" stroke-width="0.6"/>
<path d="M593,635 L566,581" stroke="#6a8ad8" stroke-width="3"/>
<path d="M565,580 L564,597 L575,593 Z" fill="#3050b0"/>
<g font-family="Liberation Sans" font-size="14" opacity="0.85">
<text x="576" y="503" fill="#58b058" font-size="12">YM</text>
<text x="572" y="562" fill="#a8b8a8">YC</text>
<text x="565" y="578" fill="#2848d0">ZM</text>
<text x="579" y="600" fill="#3a58c8">ZC</text>
<text x="648" y="629" fill="#e07070">XC</text>
<text x="707" y="628" fill="#e07070">XM</text>
</g>
<!-- crosshair -->
<circle cx="762" cy="650" r="9" fill="#e01818"/>
<circle cx="762" cy="650" r="13" fill="none" stroke="#111" stroke-width="3.5" stroke-dasharray="14 6.4" stroke-dashoffset="3"/>
<circle cx="762" cy="650" r="13" fill="none" stroke="#fff" stroke-width="1.8" stroke-dasharray="14 6.4" stroke-dashoffset="3"/>
<path d="M741,650 L783,650 M762,631 L762,671" stroke="#111" stroke-width="3.6"/>
<path d="M742,650 L782,650 M762,632 L762,670" stroke="#f8f8f8" stroke-width="1.4"/>
<path d="M730,642 L750,648" stroke="#ddd" stroke-width="1"/>
<!-- triad -->
<g>
<rect x="70" y="989" width="37" height="39" fill="#c8c8c8"/>
<path d="M70,1010 L107,1010 M88,989 L88,1028" stroke="#b0b0b0" stroke-width="1"/>
<path d="M79,1028 L125,1028" stroke="#d83a3a" stroke-width="3"/>
<path d="M112,1024 L126,1028 L112,1032 Z" fill="#e04040"/>
<path d="M79,987 L79,1028" stroke="#40a040" stroke-width="1.5"/>
<path d="M74,1027 L62,1010" stroke="#1838c8" stroke-width="3.5"/>
<circle cx="75" cy="1029" r="4" fill="#eee"/>
<text x="73" y="983" font-family="Liberation Sans" font-size="12" fill="#50a050">Y</text>
<text x="126" y="1035" font-family="Liberation Sans" font-size="12" fill="#c04848">X</text>
</g>
</svg>

<div class="a" style="left:1171px;top:989px;width:46px;height:91px;background:#cdcdcd"></div>
<div class="a" style="left:1217px;top:989px;width:13px;height:91px;background:linear-gradient(90deg,#f4f4f4,#e4e4e4)"></div>
<div class="a" style="left:1171px;top:211px;width:375px;height:778px;background:#ececec"></div>
<div class="a" style="left:1230px;top:989px;width:316px;height:91px;background:#ebebeb"></div>
<div class="a" style="left:1230px;top:211px;width:316px;height:43px;background:linear-gradient(#f2f2f2,#e6e6e6);border-bottom:2px solid #8a8a8a"></div>
<div class="t" style="left:1284px;top:224px;font-size:17.5px;font-weight:bold;color:#111">序导航器</div>
<div class="a" style="left:1367px;top:232px;width:8px;height:2.5px;background:#111"></div>
<div class="t" style="left:1383px;top:224px;font-size:17.5px;font-weight:bold;color:#111">程序顺序</div>
<div class="a" style="left:1230px;top:254px;width:314px;height:743px;background:#fdfdfd;border-left:1px solid #777"></div>
<div class="a" style="left:1230px;top:254px;width:314px;height:22px;background:linear-gradient(#f6f6f6,#e2e2e2);border-bottom:2px solid #8e8e8e"></div>
<div class="a" style="left:1402px;top:254px;width:1px;height:22px;background:#cfcfcf"></div>
<div class="a" style="left:1449px;top:254px;width:1px;height:22px;background:#cfcfcf"></div>
<div class="t" style="left:1410px;top:257px;font-size:16px;color:#111">换刀</div>
<div class="t" style="left:1457px;top:257px;font-size:16px;color:#111">余量</div>
<div class="a" style="left:1231px;top:276.0px;width:313px;height:26.7px;background:#fdfdfd;border-bottom:1px solid #e6e6e6"></div>
<div class="a" style="left:1231px;top:302.7px;width:313px;height:26.7px;background:#f7f7f7;border-bottom:1px solid #e6e6e6"></div>
<div class="a" style="left:1231px;top:329.4px;width:313px;height:26.7px;background:#fdfdfd;border-bottom:1px solid #e6e6e6"></div>
<div class="a" style="left:1231px;top:356.2px;width:313px;height:26.7px;background:#f7f7f7;border-bottom:1px solid #e6e6e6"></div>
<div class="a" style="left:1231px;top:382.9px;width:313px;height:26.7px;background:#fdfdfd;border-bottom:1px solid #e6e6e6"></div>
<div class="a" style="left:1231px;top:409.6px;width:313px;height:26.7px;background:#f7f7f7;border-bottom:1px solid #e6e6e6"></div>
<div class="a" style="left:1231px;top:436.3px;width:313px;height:26.7px;background:#fdfdfd;border-bottom:1px solid #e6e6e6"></div>
<div class="a" style="left:1231px;top:463.0px;width:313px;height:26.7px;background:#f7f7f7;border-bottom:1px solid #e6e6e6"></div>
<div class="a" style="left:1231px;top:489.8px;width:313px;height:26.7px;background:#fdfdfd;border-bottom:1px solid #e6e6e6"></div>
<div class="a" style="left:1231px;top:516.5px;width:313px;height:26.7px;background:#f7f7f7;border-bottom:1px solid #e6e6e6"></div>
<div class="a" style="left:1231px;top:543.2px;width:313px;height:26.7px;background:#fdfdfd;border-bottom:1px solid #e6e6e6"></div>
<div class="a" style="left:1231px;top:569.9px;width:313px;height:26.7px;background:#f7f7f7;border-bottom:1px solid #e6e6e6"></div>
<div class="a" style="left:1231px;top:596.6px;width:313px;height:26.7px;background:#fdfdfd;border-bottom:1px solid #e6e6e6"></div>
<div class="a" style="left:1231px;top:623.4px;width:313px;height:26.7px;background:#f7f7f7;border-bottom:1px solid #e6e6e6"></div>
<div class="a" style="left:1231px;top:650.1px;width:313px;height:26.7px;background:#fdfdfd;border-bottom:1px solid #e6e6e6"></div>
<div class="a" style="left:1231px;top:676.8px;width:313px;height:26.7px;background:#f7f7f7;border-bottom:1px solid #e6e6e6"></div>
<div class="a" style="left:1231px;top:703.5px;width:313px;height:26.7px;background:#fdfdfd;border-bottom:1px solid #e6e6e6"></div>
<div class="a" style="left:1231px;top:730.2px;width:313px;height:26.7px;background:#f7f7f7;border-bottom:1px solid #e6e6e6"></div>
<div class="a" style="left:1231px;top:757.0px;width:313px;height:26.7px;background:#fdfdfd;border-bottom:1px solid #e6e6e6"></div>
<div class="a" style="left:1231px;top:783.7px;width:313px;height:26.7px;background:#f7f7f7;border-bottom:1px solid #e6e6e6"></div>
<div class="a" style="left:1231px;top:810.4px;width:313px;height:26.7px;background:#fdfdfd;border-bottom:1px solid #e6e6e6"></div>
<div class="a" style="left:1231px;top:837.1px;width:313px;height:26.7px;background:#f7f7f7;border-bottom:1px solid #e6e6e6"></div>
<div class="a" style="left:1231px;top:863.8px;width:313px;height:26.7px;background:#fdfdfd;border-bottom:1px solid #e6e6e6"></div>
<div class="a" style="left:1231px;top:890.6px;width:313px;height:26.7px;background:#f7f7f7;border-bottom:1px solid #e6e6e6"></div>
<div class="a" style="left:1231px;top:917.3px;width:313px;height:26.7px;background:#fdfdfd;border-bottom:1px solid #e6e6e6"></div>
<div class="a" style="left:1231px;top:944.0px;width:313px;height:26.7px;background:#f7f7f7;border-bottom:1px solid #e6e6e6"></div>
<div class="a" style="left:1231px;top:970.7px;width:313px;height:25.3px;background:#fdfdfd;border-bottom:1px solid #e6e6e6"></div>
<div class="a" style="left:1401px;top:276px;width:2px;height:720px;background:#3a3a3a"></div>
<div class="a" style="left:1449px;top:276px;width:1px;height:720px;background:#ececec"></div>
<div class="t" style="left:1299px;top:283.0px;font-size:14px;color:#111;font-family:'Liberation Serif',serif;font-weight:bold;letter-spacing:-1px;">AM</div>
<div class="t" style="left:1299px;top:308.7px;font-size:16px;color:#111">用项</div>
<div class="t" style="left:1305px;top:336.4px;font-size:14px;color:#111;font-family:'Liberation Serif',serif;font-weight:bold;">H</div>
<svg class="a" style="left:1306px;top:361px" width="20" height="18" viewBox="0 0 20 18"><path d="M1 3 L7 3 L8 5 L18 5 L18 17 L1 17 Z" fill="#f4e8a8" stroke="#a89850" stroke-width="1"/><rect x="9" y="8" width="8" height="8" fill="#3838c0"/><path d="M11 10 L15 10 L15 12 L11 12 L11 14 L15 14" stroke="#fff" stroke-width="1" fill="none"/></svg>
<div class="t" style="left:1330px;top:363.2px;font-size:15px;color:#111;font-family:'Liberation Serif',serif;letter-spacing:0px;">H-01</div>
<svg class="a" style="left:1306px;top:414px" width="20" height="18" viewBox="0 0 20 18"><path d="M1 3 L7 3 L8 5 L18 5 L18 17 L1 17 Z" fill="#f4e8a8" stroke="#a89850" stroke-width="1"/><rect x="9" y="8" width="8" height="8" fill="#3838c0"/><path d="M11 10 L15 10 L15 12 L11 12 L11 14 L15 14" stroke="#fff" stroke-width="1" fill="none"/></svg>
<div class="t" style="left:1330px;top:416.6px;font-size:15px;color:#111;font-family:'Liberation Serif',serif;letter-spacing:0px;">H-04</div>
<svg class="a" style="left:1306px;top:441px" width="20" height="18" viewBox="0 0 20 18"><path d="M1 3 L7 3 L8 5 L18 5 L18 17 L1 17 Z" fill="#f4e8a8" stroke="#a89850" stroke-width="1"/><rect x="9" y="8" width="8" height="8" fill="#3838c0"/><path d="M11 10 L15 10 L15 12 L11 12 L11 14 L15 14" stroke="#fff" stroke-width="1" fill="none"/></svg>
<div class="t" style="left:1330px;top:443.3px;font-size:15px;color:#111;font-family:'Liberation Serif',serif;letter-spacing:0px;">H-05</div>
<svg class="a" style="left:1306px;top:494px" width="20" height="18" viewBox="0 0 20 18"><path d="M1 3 L7 3 L8 5 L18 5 L18 17 L1 17 Z" fill="#f4e8a8" stroke="#a89850" stroke-width="1"/><rect x="9" y="8" width="8" height="8" fill="#3838c0"/><path d="M11 10 L15 10 L15 12 L11 12 L11 14 L15 14" stroke="#fff" stroke-width="1" fill="none"/></svg>
<div class="t" style="left:1330px;top:496.8px;font-size:15px;color:#111;font-family:'Liberation Serif',serif;letter-spacing:0px;">H-10</div>
<svg class="a" style="left:1306px;top:521px" width="20" height="18" viewBox="0 0 20 18"><path d="M1 3 L7 3 L8 5 L18 5 L18 17 L1 17 Z" fill="#f4e8a8" stroke="#a89850" stroke-width="1"/><rect x="9" y="8" width="8" height="8" fill="#3838c0"/><path d="M11 10 L15 10 L15 12 L11 12 L11 14 L15 14" stroke="#fff" stroke-width="1" fill="none"/></svg>
<div class="t" style="left:1330px;top:523.5px;font-size:15px;color:#111;font-family:'Liberation Serif',serif;letter-spacing:0px;">H-11</div>
<svg class="a" style="left:1306px;top:548px" width="20" height="18" viewBox="0 0 20 18"><path d="M1 3 L7 3 L8 5 L18 5 L18 17 L1 17 Z" fill="#f4e8a8" stroke="#a89850" stroke-width="1"/><rect x="9" y="8" width="8" height="8" fill="#3838c0"/><path d="M11 10 L15 10 L15 12 L11 12 L11 14 L15 14" stroke="#fff" stroke-width="1" fill="none"/></svg>
<div class="t" style="left:1330px;top:550.2px;font-size:15px;color:#111;font-family:'Liberation Serif',serif;letter-spacing:0px;">H-12</div>
<svg class="a" style="left:1306px;top:574px" width="20" height="18" viewBox="0 0 20 18"><path d="M1 3 L7 3 L8 5 L18 5 L18 17 L1 17 Z" fill="#f4e8a8" stroke="#a89850" stroke-width="1"/><rect x="9" y="8" width="8" height="8" fill="#3838c0"/><path d="M11 10 L15 10 L15 12 L11 12 L11 14 L15 14" stroke="#fff" stroke-width="1" fill="none"/></svg>
<div class="t" style="left:1330px;top:576.9px;font-size:15px;color:#111;font-family:'Liberation Serif',serif;letter-spacing:0px;">H-13</div>
<svg class="a" style="left:1306px;top:601px" width="20" height="18" viewBox="0 0 20 18"><path d="M1 3 L7 3 L8 5 L18 5 L18 17 L1 17 Z" fill="#f4e8a8" stroke="#a89850" stroke-width="1"/><rect x="9" y="8" width="8" height="8" fill="#3838c0"/><path d="M11 10 L15 10 L15 12 L11 12 L11 14 L15 14" stroke="#fff" stroke-width="1" fill="none"/></svg>
<div class="t" style="left:1330px;top:603.6px;font-size:15px;color:#111;font-family:'Liberation Serif',serif;letter-spacing:0px;">H-14</div>
<svg class="a" style="left:1313px;top:385px" width="14" height="22" viewBox="0 0 14 22"><path d="M7 1 Q12 1 12 7 Q12 11 9 14 L5 14 Q2 11 2 7 Q2 1 7 1 Z" fill="#f0e040" stroke="#c8b020"/><rect x="4" y="15" width="6" height="4" fill="#d8c030"/></svg>
<svg class="a" style="left:1330px;top:385px" width="22" height="22" viewBox="0 0 22 22"><path d="M3 6 Q2 18 14 20 L18 20 L18 16 Q8 16 8 6 Z" fill="#205060"/><rect x="10" y="2" width="7" height="12" fill="#4070d0"/><rect x="13" y="12" width="7" height="3" fill="#4070d0"/></svg>
<div class="t" style="left:1355px;top:389.9px;font-size:15px;color:#4a3aa8;font-family:'Liberation Serif',serif;letter-spacing:0.5px;">CA. . .</div>
<svg class="a" style="left:1413px;top:387px" width="11" height="18" viewBox="0 0 11 18"><rect x="1" y="1" width="9" height="16" fill="#6060c8" stroke="#383890"/><path d="M3 5 L8 5 M3 9 L8 9 M3 13 L8 13" stroke="#a8a8f0"/></svg>
<div class="t" style="left:1455px;top:389.9px;font-size:15px;color:#4a3aa8;font-family:'Liberation Serif',serif;letter-spacing:0.3px;">0. 3000</div>
<svg class="a" style="left:1313px;top:466px" width="14" height="22" viewBox="0 0 14 22"><path d="M7 1 Q12 1 12 7 Q12 11 9 14 L5 14 Q2 11 2 7 Q2 1 7 1 Z" fill="#f0e040" stroke="#c8b020"/><rect x="4" y="15" width="6" height="4" fill="#d8c030"/></svg>
<svg class="a" style="left:1330px;top:466px" width="22" height="22" viewBox="0 0 22 22"><path d="M3 6 Q2 18 14 20 L18 20 L18 16 Q8 16 8 6 Z" fill="#205060"/><rect x="10" y="2" width="7" height="12" fill="#4070d0"/><rect x="13" y="12" width="7" height="3" fill="#4070d0"/></svg>
<div class="t" style="left:1355px;top:470.0px;font-size:15px;color:#4a3aa8;font-family:'Liberation Serif',serif;letter-spacing:0.5px;">ZL. . .</div>
<svg class="a" style="left:1413px;top:468px" width="11" height="18" viewBox="0 0 11 18"><rect x="1" y="1" width="9" height="16" fill="#6060c8" stroke="#383890"/><path d="M3 5 L8 5 M3 9 L8 9 M3 13 L8 13" stroke="#a8a8f0"/></svg>
<div class="t" style="left:1455px;top:470.0px;font-size:15px;color:#4a3aa8;font-family:'Liberation Serif',serif;letter-spacing:0.3px;">0. 1000</div>
<svg class="a" style="left:1296px;top:602px" width="6" height="16" viewBox="0 0 6 16"><path d="M5 1 Q0 8 5 15" stroke="#d02020" stroke-width="2" fill="none"/></svg>
<div class="a" style="left:1230px;top:996px;width:314px;height:25px;background:#f0f0f0;border-left:1px solid #777;border-bottom:1px solid #555"></div>
<div class="a" style="left:1256px;top:998px;width:145px;height:19px;background:#c6c6c6;border-radius:2px"></div>
<svg class="a" style="left:1239px;top:999px" width="10" height="14" viewBox="0 0 10 14"><path d="M8 2 L3 7 L8 12" stroke="#555" stroke-width="2.5" fill="none"/></svg>
<div class="a" style="left:1230px;top:1027px;width:314px;height:2px;background:linear-gradient(#d0d0d0,#fff)"></div>
<div class="a" style="left:1393px;top:1025px;width:71px;height:7px;background:linear-gradient(#f0f0f0,#c8c8c8);border:1px solid #bbb"></div>
<div class="a" style="left:1232px;top:1037px;width:312px;height:31px;background:linear-gradient(#f8f8f8 0%,#f0f0f0 45%,#d8d8d8 60%,#e0e0e0 100%);border-bottom:1px solid #b8b8b8"></div>
<div class="t" style="left:1240px;top:1043px;font-size:17px;font-weight:bold;color:#111">相依性</div>
<div class="a" style="left:1232px;top:1069px;width:312px;height:11px;background:#f6f6f6"></div>
<div class="t" style="left:1240px;top:1072px;font-size:17px;font-weight:bold;color:#111">细节</div>
<div class="a" style="left:1544px;top:212px;width:2px;height:868px;background:#c8c8c8"></div>
<div class="a" style="left:905px;top:211px;width:394px;height:30px;background:linear-gradient(#7a7a7a 0,#5a5a5a 5px,#3e3e3e 10px,#161616 11px,#161616 100%);border:1px solid #888;border-bottom:1px solid #666"></div>
<div class="a" style="left:933px;top:212px;width:1px;height:28px;background:#8a8a8a"></div>
<div class="a" style="left:1272px;top:212px;width:1px;height:28px;background:#8a8a8a"></div>
<svg class="a" style="left:910px;top:216px" width="20" height="20" viewBox="0 0 20 20"><g fill="#fff"><circle cx="10" cy="10" r="6.5"/><g stroke="#fff" stroke-width="3.5"><path d="M10 1.5 L10 18.5 M1.5 10 L18.5 10 M4 4 L16 16 M16 4 L4 16"/></g></g><circle cx="10" cy="10" r="3" fill="#161616"/><circle cx="10" cy="10" r="1.2" fill="#fff"/></svg>
<div class="t" style="left:946px;top:215px;font-size:18px;font-weight:bold;color:#fff;letter-spacing:0.9px;-webkit-text-stroke:0.5px #fff">非切削移动</div>
<svg class="a" style="left:1277px;top:216px" width="18" height="18" viewBox="0 0 18 18"><path d="M3 3 L15 15 M15 3 L3 15" stroke="#fff" stroke-width="3.5"/></svg>
<div class="a" style="left:905px;top:241px;width:394px;height:736px;background:linear-gradient(90deg,#e4e4e4,#ececec 3%,#ececec 97%,#e0e0e0);border-left:1px solid #9a9a9a;border-right:1px solid #9a9a9a"></div>
<div class="a" style="left:905px;top:977px;width:394px;height:12px;background:linear-gradient(#555 0,#2a2a2a 2px,#1a1a1a 100%);border-radius:0 0 8px 2px"></div>
<div class="a" style="left:922px;top:254px;width:135px;height:24px;border:1px solid #a0a0a0;border-radius:5px 5px 0 0;background:linear-gradient(#f2f2f2 0%,#e8e8e8 50%,#c8c8c8 62%,#d8d8d8 100%)"></div>
<div class="t" style="left:922px;top:258px;width:135px;text-align:center;font-size:16px;color:#111;letter-spacing:0.5px">转移/快速</div>
<div class="a" style="left:1059px;top:254px;width:110px;height:24px;border:1px solid #a0a0a0;border-radius:5px 5px 0 0;background:linear-gradient(#f2f2f2 0%,#e8e8e8 50%,#c8c8c8 62%,#d8d8d8 100%)"></div>
<div class="t" style="left:1059px;top:258px;width:110px;text-align:center;font-size:16px;color:#111;letter-spacing:0.5px">避让</div>
<div class="a" style="left:1171px;top:254px;width:110px;height:24px;border:1px solid #a0a0a0;border-radius:5px 5px 0 0;background:linear-gradient(#f2f2f2 0%,#e8e8e8 50%,#c8c8c8 62%,#d8d8d8 100%)"></div>
<div class="t" style="left:1171px;top:258px;width:110px;text-align:center;font-size:16px;color:#111;letter-spacing:0.5px">更多</div>
<div class="a" style="left:922px;top:277px;width:111px;height:23px;border:1px solid #a0a0a0;border-radius:5px 5px 0 0;background:linear-gradient(#f2f2f2 0%,#e8e8e8 50%,#c8c8c8 62%,#d8d8d8 100%)"></div>
<div class="t" style="left:922px;top:281px;width:111px;text-align:center;font-size:16px;color:#111;letter-spacing:0.5px">进刀</div>
<div class="a" style="left:1035px;top:277px;width:110px;height:23px;border:1px solid #a0a0a0;border-radius:5px 5px 0 0;background:linear-gradient(#f2f2f2 0%,#e8e8e8 50%,#c8c8c8 62%,#d8d8d8 100%)"></div>
<div class="t" style="left:1035px;top:281px;width:110px;text-align:center;font-size:16px;color:#111;letter-spacing:0.5px">退刀</div>
<div class="a" style="left:919px;top:299px;width:363px;height:618px;border:1px solid #8a8a8a;border-top:1px solid #a0a0a0;background:linear-gradient(#ececec 0%,#e8e8e8 88%,#dcdcdc 100%)"></div>
<div class="a" style="left:1146px;top:274px;width:135px;height:27px;border:1px solid #a0a0a0;border-bottom:none;border-radius:5px 5px 0 0;background:#efefef"></div>
<div class="t" style="left:1146px;top:279px;width:135px;text-align:center;font-size:16px;color:#111;letter-spacing:0.5px">起点/钻点</div>
<div class="a" style="left:926px;top:307px;width:348px;height:30px;background:linear-gradient(#fafafa 0%,#f0f0f0 45%,#dcdcdc 100%);border-bottom:1px solid #c8c8c8"></div>
<div class="a" style="left:1243px;top:307px;width:1px;height:30px;background:#cfcfcf"></div>
<div class="t" style="left:934px;top:314px;font-size:16px;font-weight:bold;color:#111;letter-spacing:1.5px">重叠距离</div>
<svg class="a" style="left:1251px;top:315px" width="16" height="13" viewBox="0 0 16 13"><path d="M2 10 L8 3 L14 10" stroke="#555" stroke-width="3" fill="none"/></svg>
<div class="a" style="left:926px;top:337px;width:348px;height:48px;background:linear-gradient(#bdbdbd,#cbcbcb 4px,#cbcbcb);"></div>
<div class="t" style="left:936px;top:350px;font-size:16px;color:#111;">重叠距离</div>
<div class="a" style="left:1116px;top:348px;width:75px;height:21px;background:#fff;border:1px solid #8a8a8a;border-radius:3px;box-shadow:0 1px 0 #eee;overflow:hidden">
<div class="a" style="left:3px;top:2px;width:32px;height:15px;background:#1670d8"></div>
<div class="t" style="left:16px;top:3px;font-size:14px;color:#fff;font-family:'Liberation Mono',monospace;">0.</div>
<div class="t" style="left:36px;top:3px;font-size:14px;color:#111;font-family:'Liberation Mono',monospace;;letter-spacing:-1px">00000</div>
</div>
<div class="a" style="left:1197px;top:348px;width:66px;height:23px;background:#fff;border:1px solid #8a8a8a;border-radius:3px"></div>
<div class="t" style="left:1201px;top:353px;font-size:12px;color:#111;font-family:'Liberation Mono',monospace;font-weight:bold;">mm</div>
<div class="a" style="left:1239px;top:348px;width:23px;height:23px;background:linear-gradient(#d0e4fa,#6aa8e8 55%,#4a90e0);border:1px solid #3a70b8;border-radius:0 3px 3px 0"></div>
<svg class="a" style="left:1243px;top:354px" width="15" height="10" viewBox="0 0 15 10"><path d="M0 1 L15 1 L7.5 9 Z" fill="#111"/></svg>
<div class="a" style="left:926px;top:385px;width:348px;height:30px;background:linear-gradient(#fafafa 0%,#f0f0f0 45%,#dcdcdc 100%);border-bottom:1px solid #c8c8c8"></div>
<div class="a" style="left:1243px;top:385px;width:1px;height:30px;background:#cfcfcf"></div>
<div class="t" style="left:934px;top:392px;font-size:16px;font-weight:bold;color:#111;letter-spacing:1.5px">区域起点</div>
<svg class="a" style="left:1251px;top:393px" width="16" height="13" viewBox="0 0 16 13"><path d="M2 10 L8 3 L14 10" stroke="#555" stroke-width="3" fill="none"/></svg>
<div class="a" style="left:926px;top:415px;width:348px;height:270px;background:linear-gradient(#bdbdbd,#cbcbcb 4px,#cbcbcb);"></div>
<div class="t" style="left:936px;top:429px;font-size:16px;color:#111;">默认区域起点</div>
<div class="a" style="left:1121px;top:425px;width:142px;height:24px;background:#fff;border:1px solid #8a8a8a;border-radius:3px"></div>
<div class="t" style="left:1125px;top:429px;font-size:16px;color:#111;">中点</div>
<div class="a" style="left:1239px;top:425px;width:23px;height:24px;background:linear-gradient(#d0e4fa,#6aa8e8 55%,#4a90e0);border:1px solid #3a70b8;border-radius:0 3px 3px 0"></div>
<svg class="a" style="left:1243px;top:432px" width="15" height="10" viewBox="0 0 15 10"><path d="M0 1 L15 1 L7.5 9 Z" fill="#111"/></svg>
<div class="a" style="left:937px;top:453px;width:325px;height:160px;background:#c6c6c6;border:1px solid #b8b8b8;border-top:1px solid #a8a8a8"></div>
<div class="t" style="left:948px;top:461px;font-size:16px;font-weight:bold;color:#111;letter-spacing:1.5px">选择点</div>
<svg class="a" style="left:1239px;top:461px" width="16" height="13" viewBox="0 0 16 13"><path d="M2 10 L8 3 L14 10" stroke="#555" stroke-width="3" fill="none"/></svg>
<div class="t" style="left:948px;top:505px;font-size:16px;color:#111;">指定点</div>
<div class="a" style="left:1153px;top:499px;width:29px;height:29px;background:linear-gradient(#fff,#e4e4e4);border:1px solid #888;border-radius:4px"></div>
<svg class="a" style="left:1155px;top:501px" width="25" height="25" viewBox="0 0 25 25"><path d="M14 3 L14 13 M9 8 L19 8" stroke="#111" stroke-width="1.6"/><path d="M3 14 Q4 20 10 19" stroke="#f0a020" stroke-width="2.5" fill="none"/><g fill="#111"><rect x="13" y="19" width="2.5" height="2.5"/><rect x="17" y="19" width="2.5" height="2.5"/><rect x="21" y="19" width="2.5" height="2.5"/></g></svg>
<div class="a" style="left:1188px;top:493px;width:62px;height:40px;background:linear-gradient(#fdfdfd,#e8e8e8);border:1px solid #7a9ad0;border-radius:5px"></div>
<div class="a" style="left:1227px;top:494px;width:22px;height:38px;background:linear-gradient(#dbe9fb,#7ab0ee 55%,#4a90e0);border-radius:0 4px 4px 0"></div>
<svg class="a" style="left:1231px;top:508px" width="14" height="10" viewBox="0 0 14 10"><path d="M0 1 L14 1 L7 8 Z" fill="#111"/></svg>
<svg class="a" style="left:1193px;top:500px" width="30" height="30" viewBox="0 0 30 30"><path d="M14 2 L8 14 L13 13 L9 24 L18 10 L13 11 L17 2 Z" fill="#f0d030" stroke="#907010" stroke-width="0.8"/><path d="M3 27 L10 19" stroke="#888" stroke-width="1.5"/><circle cx="19" cy="25" r="2.8" fill="#d02020"/></svg>
<div class="t" style="left:948px;top:545px;font-size:16px;color:#111;">添加新集</div>
<div class="a" style="left:1221px;top:540px;width:29px;height:28px;background:linear-gradient(#fff,#e4e4e4);border:1px solid #888;border-radius:4px"></div>
<svg class="a" style="left:1223px;top:542px" width="25" height="24" viewBox="0 0 25 24"><path d="M7 2 L7 10 M3 6 L11 6" stroke="#2050c0" stroke-width="2.5"/><circle cx="15" cy="15" r="5" fill="none" stroke="#d02020" stroke-width="2"/><path d="M15 6 L15 23 M6 15 L24 15" stroke="#d02020" stroke-width="2"/></svg>
<div class="a" style="left:949px;top:573px;width:302px;height:30px;background:linear-gradient(#a8a8a8,#b0b0b0 80%,#f0f0f0 85%,#f0f0f0);"></div>
<div class="t" style="left:960px;top:580px;font-size:16px;font-weight:bold;color:#111;letter-spacing:1.5px">列表</div>
<svg class="a" style="left:1227px;top:580px" width="17" height="13" viewBox="0 0 17 13"><path d="M2 3 L8.5 10 L15 3" stroke="#555" stroke-width="3" fill="none"/></svg>
<div class="t" style="left:936px;top:623px;font-size:16px;color:#111;">有效距离</div>
<div class="a" style="left:1121px;top:619px;width:142px;height:24px;background:#fff;border:1px solid #8a8a8a;border-radius:3px"></div>
<div class="t" style="left:1125px;top:623px;font-size:16px;color:#111;">指定</div>
<div class="a" style="left:1239px;top:619px;width:23px;height:24px;background:linear-gradient(#d0e4fa,#6aa8e8 55%,#4a90e0);border:1px solid #3a70b8;border-radius:0 3px 3px 0"></div>
<svg class="a" style="left:1243px;top:626px" width="15" height="10" viewBox="0 0 15 10"><path d="M0 1 L15 1 L7.5 9 Z" fill="#111"/></svg>
<div class="t" style="left:936px;top:651px;font-size:16px;color:#111;">距离</div>
<div class="a" style="left:1116px;top:649px;width:75px;height:21px;background:#fff;border:1px solid #8a8a8a;border-radius:3px;box-shadow:0 1px 0 #eee;overflow:hidden">
<div class="t" style="left:2px;top:3px;font-size:14px;color:#111;font-family:'Liberation Mono',monospace;;letter-spacing:-0.8px">500. 00000</div>
</div>
<div class="a" style="left:1197px;top:648px;width:66px;height:24px;background:#fff;border:1px solid #8a8a8a;border-radius:3px"></div>
<div class="t" style="left:1201px;top:652px;font-size:16px;color:#111;">刀具i</div>
<div class="a" style="left:1239px;top:648px;width:23px;height:24px;background:linear-gradient(#d0e4fa,#6aa8e8 55%,#4a90e0);border:1px solid #3a70b8;border-radius:0 3px 3px 0"></div>
<svg class="a" style="left:1243px;top:655px" width="15" height="10" viewBox="0 0 15 10"><path d="M0 1 L15 1 L7.5 9 Z" fill="#111"/></svg>
<div class="a" style="left:926px;top:685px;width:348px;height:31px;background:linear-gradient(#fafafa 0%,#f0f0f0 45%,#dcdcdc 100%);border-bottom:1px solid #c8c8c8"></div>
<div class="a" style="left:1243px;top:685px;width:1px;height:31px;background:#cfcfcf"></div>
<div class="t" style="left:934px;top:692px;font-size:16px;font-weight:bold;color:#111;letter-spacing:1.5px">预钻点</div>
<svg class="a" style="left:1251px;top:693px" width="16" height="13" viewBox="0 0 16 13"><path d="M2 3 L8 10 L14 3" stroke="#555" stroke-width="3" fill="none"/></svg>
<div class="a" style="left:914px;top:930px;width:376px;height:2px;background:linear-gradient(#c0c0c0,#fafafa)"></div>
<div class="a" style="left:1128px;top:938px;width:70px;height:24px;border:1px solid #3a8a3a;border-radius:4px;background:linear-gradient(#e8f8e0 0%,#a8e898 40%,#78d060 55%,#a0e888 100%)"></div>
<div class="t" style="left:1128px;top:941px;width:70px;text-align:center;font-size:16px;color:#111">确定</div>
<div class="a" style="left:1207px;top:938px;width:70px;height:24px;border:1px solid #7a7a7a;border-radius:4px;background:linear-gradient(#fafafa 0%,#e8e8e8 40%,#c8c8c8 55%,#f0f0f0 100%)"></div>
<div class="t" style="left:1207px;top:941px;width:70px;text-align:center;font-size:16px;color:#111">取消</div>
</div></body></html>
